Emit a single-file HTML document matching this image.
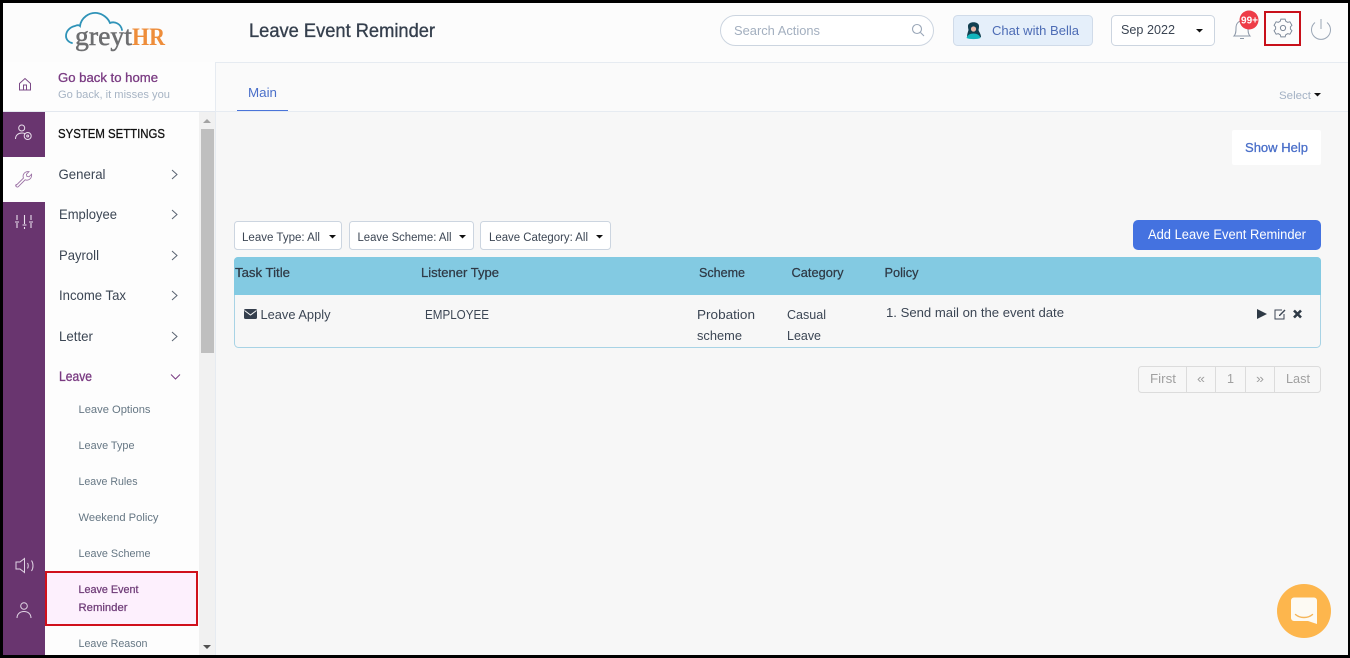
<!DOCTYPE html>
<html><head><meta charset="utf-8"><title>Leave Event Reminder</title>
<style>
html,body{margin:0;padding:0;background:#000;width:1350px;height:658px;overflow:hidden}
svg{display:block}
text{font-family:"Liberation Sans",sans-serif;font-size:14px;fill:#3c4654}
</style></head><body>
<svg width="1350" height="658" viewBox="0 0 1350 658" xmlns="http://www.w3.org/2000/svg">
<rect width="1350" height="658" fill="#000"/>
<rect x="3" y="3" width="1345" height="652" fill="#f7f7f7"/>
<!-- header -->
<rect x="3" y="3" width="1345" height="59" fill="#fcfcfc"/>
<rect x="215" y="62" width="1133" height="1" fill="#e6ebf1"/>
<!-- tab bar -->
<rect x="216" y="63" width="1132" height="48" fill="#fafafa"/>
<rect x="216" y="111" width="1132" height="1" fill="#e6ebf1"/>
<rect x="237" y="110" width="51" height="1" fill="#4a74d9"/>
<text x="248" y="97" style="font-size:13px;fill:#4a6fc9" textLength="29" lengthAdjust="spacingAndGlyphs">Main</text>
<text x="1279" y="99" style="font-size:11px;fill:#a3b1c4" textLength="32" lengthAdjust="spacingAndGlyphs">Select</text>
<path d="M1314 93h7l-3.500 3.500z" fill="#111"/>
<!-- sidebar -->
<rect x="3" y="62" width="212" height="593" fill="#fdfdfd"/>
<rect x="3" y="111" width="212" height="1" fill="#e3e8ef"/>
<rect x="215" y="62" width="1" height="593" fill="#e6ebf1"/>
<rect x="3" y="112" width="42" height="45" fill="#69356f"/>
<rect x="3" y="202" width="42" height="453" fill="#69356f"/>
<!-- scrollbar -->
<rect x="199" y="112" width="16" height="543" fill="#f1f1f1"/>
<rect x="201" y="129" width="13" height="224" fill="#bfbfbf"/>
<path d="M203 123l4-4 4 4z" fill="#a3a3a3"/>
<path d="M203 645l4 4 4-4z" fill="#505050"/>
<!-- logo -->
<path d="M72 43c-4-1-6-4-6-7 0-5 4-9 9-10 2-1 4-1 5 0 1-8 9-14 17-13 6 1 11 5 13 10 5-2 11 1 12 7" fill="none" stroke="#2f93b8" stroke-width="1.800" stroke-linecap="round"/>
<text x="75" y="45" style="font-family:'Liberation Serif',serif;font-size:27px;fill:#6d6e70;stroke:#6d6e70;stroke-width:.5" textLength="57" lengthAdjust="spacingAndGlyphs">greyt</text>
<text x="132" y="45" style="font-family:'Liberation Serif',serif;font-size:25px;font-weight:bold;fill:#ee8d3a" textLength="33" lengthAdjust="spacingAndGlyphs">HR</text>
<!-- rail icons -->
<g fill="none" stroke="#7b4a86" stroke-width="1">
<path d="M19.500 83.500l5.500-5 5.500 5v6.500h-11zM23.500 90v-5h3v5"/>
</g>
<g fill="none" stroke="#e9dfec" stroke-width="1">
<circle cx="21.700" cy="128" r="3"/><path d="M15.500 139c0-4 3-6 6.500-6 1.500 0 2.500.3 3 .8"/><circle cx="27.700" cy="136" r="3.500"/><circle cx="27.700" cy="136" r="1"/>
</g>
<path d="M16 186l8-8c-1.500-4 1.500-8 6.500-7.500l-3 3 .5 2.500 2.500.5 3-3c.5 5-3.500 8-7.500 6.500l-8 8c-1.500 1.500-4-1-2.500-2.500z" fill="none" stroke="#9a6fa3" stroke-width="1" transform="translate(2.800 25) scale(.86)"/>
<g stroke="#e9dfec" stroke-width="1.100" fill="none">
<path d="M17 215v5M17 223v5M24.500 215v9M24.500 227v2M31 215v5M31 223v5M15 222h4M22.500 225h4M29 222h4"/>
</g>
<g fill="none" stroke="#e0d4e4" stroke-width="1">
<path d="M16 562h4l4.500-3.500v14l-4.500-3.500h-4zM27.500 563c1 1.500 1 4 0 5.500M31.500 560.500c2 3 2 7.500 0 10.500"/>
<circle cx="24" cy="606" r="3.300"/><path d="M17 618c0-4 3-6.500 7-6.500s7 2.500 7 6.500"/>
</g>
<!-- home -->
<text x="58" y="82" style="font-size:13px;fill:#7a3b82;stroke:#7a3b82;stroke-width:.3" textLength="100" lengthAdjust="spacingAndGlyphs">Go back to home</text>
<text x="58" y="98" style="font-size:11px;fill:#a7b4c4" textLength="112" lengthAdjust="spacingAndGlyphs">Go back, it misses you</text>
<!-- menu -->
<text x="58" y="138" style="font-size:13px;fill:#111;stroke:#111;stroke-width:.3" textLength="107" lengthAdjust="spacingAndGlyphs">SYSTEM SETTINGS</text>
<text x="58.500" y="179" style="font-size:14px" textLength="47" lengthAdjust="spacingAndGlyphs">General</text>
<text x="59" y="219" style="font-size:14px" textLength="58" lengthAdjust="spacingAndGlyphs">Employee</text>
<text x="59" y="260" style="font-size:14px" textLength="40" lengthAdjust="spacingAndGlyphs">Payroll</text>
<text x="59" y="300" style="font-size:14px" textLength="67" lengthAdjust="spacingAndGlyphs">Income Tax</text>
<text x="59" y="341" style="font-size:14px" textLength="34" lengthAdjust="spacingAndGlyphs">Letter</text>
<text x="59" y="381" style="font-size:14px;fill:#7a3b82;stroke:#7a3b82;stroke-width:.35" textLength="33" lengthAdjust="spacingAndGlyphs">Leave</text>
<g fill="none" stroke="#5a6472" stroke-width="1">
<path d="M172 170l5 4.500-5 4.500M172 210l5 4.500-5 4.500M172 251l5 4.500-5 4.500M172 291l5 4.500-5 4.500M172 332l5 4.500-5 4.500"/>
<path d="M171 374.500l4.500 4.500 4.500-4.500" stroke="#7a3b82"/>
</g>
<g>
<text x="78.500" y="413" style="font-size:11px;fill:#667784" textLength="72" lengthAdjust="spacingAndGlyphs">Leave Options</text>
<text x="78.500" y="449" style="font-size:11px;fill:#667784" textLength="56" lengthAdjust="spacingAndGlyphs">Leave Type</text>
<text x="78.500" y="485" style="font-size:11px;fill:#667784" textLength="59" lengthAdjust="spacingAndGlyphs">Leave Rules</text>
<text x="78.500" y="521" style="font-size:11px;fill:#667784" textLength="80" lengthAdjust="spacingAndGlyphs">Weekend Policy</text>
<text x="78.500" y="557" style="font-size:11px;fill:#667784" textLength="72" lengthAdjust="spacingAndGlyphs">Leave Scheme</text>
<text x="78.500" y="647" style="font-size:11px;fill:#667784" textLength="69" lengthAdjust="spacingAndGlyphs">Leave Reason</text>
</g>
<rect x="46" y="572" width="151" height="53" fill="#fdf0fd" stroke="#d0101c" stroke-width="2"/>
<text x="78.500" y="593" style="font-size:11px;fill:#6f3c78;stroke:#6f3c78;stroke-width:.25" textLength="60" lengthAdjust="spacingAndGlyphs">Leave Event</text>
<text x="78.500" y="611" style="font-size:11px;fill:#6f3c78;stroke:#6f3c78;stroke-width:.25" textLength="49" lengthAdjust="spacingAndGlyphs">Reminder</text>
<!-- title -->
<text x="249" y="37" style="font-size:19px;fill:#353f4d;stroke:#353f4d;stroke-width:.35" textLength="186" lengthAdjust="spacingAndGlyphs">Leave Event Reminder</text>
<!-- search -->
<rect x="720.500" y="15.500" width="213" height="30" rx="15" fill="#fff" stroke="#ccd5e0"/>
<text x="734" y="35" style="font-size:13px;fill:#a3afbf" textLength="86" lengthAdjust="spacingAndGlyphs">Search Actions</text>
<circle cx="917" cy="29" r="4.500" fill="none" stroke="#9aa7b8" stroke-width="1.100"/><path d="M920.500 32.500l3.500 3.500" stroke="#9aa7b8" stroke-width="1.100"/>
<!-- chat -->
<rect x="953.500" y="15.500" width="139" height="30" rx="4" fill="#e5effa" stroke="#d0dbe9"/>
<path d="M967 37c0-3 1-5 1.500-7-.5-2-.5-3-.5-4 0-5 11-5 11 0 0 1 0 2-.5 4 .5 2 2.500 4 2.500 7-2 1.500-12 1.500-14 0z" fill="#123f50"/>
<path d="M966.500 38c1-3 3.500-4.500 7-4.500s6 1.500 7 4.500c-3 1.500-11 1.500-14 0z" fill="#12b5bd"/>
<circle cx="973.500" cy="29" r="2.600" fill="#eab8a8"/>
<text x="992" y="35" style="font-size:13px;fill:#4d6cb5" textLength="87" lengthAdjust="spacingAndGlyphs">Chat with Bella</text>
<!-- month -->
<rect x="1111.500" y="15.500" width="103" height="30" rx="4" fill="#fff" stroke="#ccd5e0"/>
<text x="1121" y="34" style="font-size:13px;fill:#3c4654" textLength="54" lengthAdjust="spacingAndGlyphs">Sep 2022</text>
<path d="M1196 29h7l-3.500 3.500z" fill="#111"/>
<!-- bell -->
<path d="M1234 36c2-2 2-5 2-8 0-4 2-7 6-7s6 3 6 7c0 3 0 6 2 8zM1240 38.500h4" fill="none" stroke="#8c98a8" stroke-width="1"/>
<circle cx="1249" cy="20" r="9.500" fill="#ee3d48"/>
<text x="1241" y="23.500" style="font-size:10px;font-weight:bold;fill:#fff" textLength="17" lengthAdjust="spacingAndGlyphs">99+</text>
<!-- gear -->
<rect x="1265" y="12" width="35" height="33" fill="none" stroke="#c8101a" stroke-width="2"/>
<path d="M1280.500 20h5l.8 2.500 2.200 1.200 2.600-.6 2.400 4.100-1.800 1.900v2.600l1.800 1.900-2.400 4.100-2.600-.6-2.200 1.200-.8 2.500h-5l-.8-2.500-2.200-1.200-2.600.6-2.400-4.100 1.800-1.900v-2.600l-1.800-1.900 2.400-4.100 2.600.6 2.200-1.200z" fill="none" stroke="#7d8999" stroke-width="1.150" transform="translate(1283 28) scale(.85) translate(-1283 -30.400)"/>
<circle cx="1283" cy="28" r="2.600" fill="none" stroke="#7d8999"/>
<!-- power -->
<path d="M1315 22.500a9.500 9.500 0 1 0 12 0M1321 19v10" fill="none" stroke="#9aa6b5" stroke-width="1"/>
<!-- help -->
<rect x="1232" y="130" width="89" height="35" rx="2" fill="#fff"/>
<text x="1245" y="152" style="font-size:13px;fill:#4a6fc9;stroke:#4a6fc9;stroke-width:.3" textLength="63" lengthAdjust="spacingAndGlyphs">Show Help</text>
<!-- filters -->
<rect x="234.500" y="221.500" width="107" height="28" rx="3" fill="#fff" stroke="#ccd5e0"/>
<text x="242" y="241" style="font-size:11.500px" textLength="78" lengthAdjust="spacingAndGlyphs">Leave Type: All</text>
<path d="M329 235h7l-3.500 3.500z" fill="#111"/>
<rect x="349.500" y="221.500" width="124" height="28" rx="3" fill="#fff" stroke="#ccd5e0"/>
<text x="357.500" y="241" style="font-size:11.500px" textLength="94" lengthAdjust="spacingAndGlyphs">Leave Scheme: All</text>
<path d="M459 235h7l-3.500 3.500z" fill="#111"/>
<rect x="480.500" y="221.500" width="130" height="28" rx="3" fill="#fff" stroke="#ccd5e0"/>
<text x="489" y="241" style="font-size:11.500px" textLength="99" lengthAdjust="spacingAndGlyphs">Leave Category: All</text>
<path d="M596 235h7l-3.500 3.500z" fill="#111"/>
<!-- add -->
<rect x="1133" y="220" width="188" height="30" rx="5" fill="#4472e0"/>
<text x="1148" y="239" style="font-size:13.500px;fill:#fff" textLength="158" lengthAdjust="spacingAndGlyphs">Add Leave Event Reminder</text>
<!-- table -->
<rect x="234.500" y="257.500" width="1086" height="90" rx="4" fill="#f7f7f7" stroke="#a8d3e5"/>
<path d="M234 295v-34a4 4 0 0 1 4-4h1079a4 4 0 0 1 4 4v34z" fill="#83cae2"/>
<g>
<text x="235" y="277" style="font-size:13px;fill:#2f3a46;stroke:#2f3a46;stroke-width:.25" textLength="55" lengthAdjust="spacingAndGlyphs">Task Title</text>
<text x="421" y="277" style="font-size:13px;fill:#2f3a46;stroke:#2f3a46;stroke-width:.25" textLength="78" lengthAdjust="spacingAndGlyphs">Listener Type</text>
<text x="699" y="277" style="font-size:13px;fill:#2f3a46;stroke:#2f3a46;stroke-width:.25" textLength="46" lengthAdjust="spacingAndGlyphs">Scheme</text>
<text x="791.500" y="277" style="font-size:13px;fill:#2f3a46;stroke:#2f3a46;stroke-width:.25" textLength="52" lengthAdjust="spacingAndGlyphs">Category</text>
<text x="884.500" y="277" style="font-size:13px;fill:#2f3a46;stroke:#2f3a46;stroke-width:.25" textLength="34" lengthAdjust="spacingAndGlyphs">Policy</text>
</g>
<rect x="244" y="309" width="13" height="10" rx="1.500" fill="#353f4d"/>
<path d="M244.500 310.500l6 4.500 6-4.500" fill="none" stroke="#f7f7f7" stroke-width="1"/>
<text x="260.500" y="319" style="font-size:13px" textLength="70" lengthAdjust="spacingAndGlyphs">Leave Apply</text>
<text x="425" y="319" style="font-size:13px" textLength="64" lengthAdjust="spacingAndGlyphs">EMPLOYEE</text>
<text x="697" y="319" style="font-size:13px" textLength="58" lengthAdjust="spacingAndGlyphs">Probation</text>
<text x="697" y="340" style="font-size:13px" textLength="45" lengthAdjust="spacingAndGlyphs">scheme</text>
<text x="787" y="319" style="font-size:13px" textLength="39" lengthAdjust="spacingAndGlyphs">Casual</text>
<text x="787" y="340" style="font-size:13px" textLength="34" lengthAdjust="spacingAndGlyphs">Leave</text>
<text x="886" y="317" style="font-size:13px" textLength="178" lengthAdjust="spacingAndGlyphs">1. Send mail on the event date</text>
<path d="M1257 309l10 5-10 5z" fill="#2f3a46"/>
<path d="M1282 310h-7v9h9v-5" fill="none" stroke="#3c4654" stroke-width="1"/><path d="M1279 315l5.500-5.500 1 1-5.500 5.500h-1z" fill="#3c4654"/>
<path d="M1294 310.500l7 7M1301 310.500l-7 7" stroke="#2f3a46" stroke-width="2.600"/>
<!-- pagination -->
<rect x="1138.500" y="366.500" width="182" height="26" rx="3" fill="#f7f7f7" stroke="#dcdcdc"/>
<path d="M1186.500 367v25M1215.500 367v25M1245.500 367v25M1274.500 367v25" stroke="#dcdcdc"/>
<g>
<text x="1150" y="383" style="font-size:13px;fill:#a0a0a0" textLength="26" lengthAdjust="spacingAndGlyphs">First</text>
<text x="1197" y="383" style="font-size:13px;fill:#a0a0a0" textLength="8" lengthAdjust="spacingAndGlyphs">«</text>
<text x="1227" y="383" style="font-size:13px;fill:#a0a0a0" textLength="7" lengthAdjust="spacingAndGlyphs">1</text>
<text x="1256" y="383" style="font-size:13px;fill:#a0a0a0" textLength="8" lengthAdjust="spacingAndGlyphs">»</text>
<text x="1286" y="383" style="font-size:13px;fill:#a0a0a0" textLength="24" lengthAdjust="spacingAndGlyphs">Last</text>
</g>
<!-- chat bubble -->
<circle cx="1304" cy="611" r="27" fill="#fdb64d"/>
<path d="M1294 597.500h20a3 3 0 0 1 3 3v23.500l-9-3h-14a3 3 0 0 1-3-3v-17.500a3 3 0 0 1 3-3z" fill="#fdfaf3"/>
<path d="M1295.500 614.500c4.500 4 12.500 4 17 0" fill="none" stroke="#f5b65a" stroke-width="1.400" stroke-linecap="round"/>
</svg>
</body></html>
